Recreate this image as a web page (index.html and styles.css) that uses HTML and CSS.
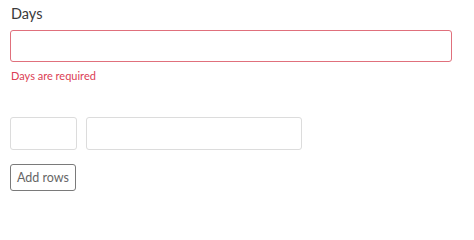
FILE: index.html
```html
<!DOCTYPE html>
<html>
<head>
<meta charset="utf-8">
<link rel="stylesheet" href="styles.css">
</head>
<body>
<div class="form">
  <div class="field">
    <label class="label">Days</label>
    <input class="input input-invalid" type="text">
    <div class="error">Days are required</div>
  </div>
  <div class="row">
    <input class="input input-small" type="text">
    <input class="input input-wide" type="text">
  </div>
  <div>
    <button class="btn">Add rows</button>
  </div>
</div>
</body>
</html>
```
FILE: styles.css
```css
html, body {
  margin: 0;
  padding: 0;
  background: #ffffff;
}
body {
  font-family: "Lato", "Noto Sans", sans-serif;
  color: #333333;
}
.form {
  padding: 4px 22px 0 10px;
  display: flex;
  flex-direction: column;
}
.field {
  display: flex;
  flex-direction: column;
}
.label {
  font-size: 14.5px;
  line-height: 20px;
  padding-left: 1px;
  margin-bottom: 6px;
  color: #3a3a3a;
}
.input {
  box-sizing: border-box;
  border: 1px solid #dcdcdc;
  border-radius: 3px;
  height: 33px;
  background: #fff;
  outline: none;
  margin: 0;
  padding: 0 8px;
}
.input-invalid {
  border-color: #e0707c;
  width: 442px;
  height: 32px;
}
.error {
  font-size: 11px;
  line-height: 16px;
  margin-top: 6px;
  padding-left: 1px;
  color: #dc4055;
}
.row {
  display: flex;
  gap: 9px;
  margin-top: 33px;
}
.input-small {
  width: 67px;
}
.input-wide {
  width: 216px;
}
.btn {
  margin-top: 14px;
  box-sizing: border-box;
  height: 27px;
  width: 66px;
  padding: 0;
  font-family: "Lato", "Noto Sans", sans-serif;
  font-size: 12.5px;
  color: #666;
  background: #fff;
  border: 1px solid #7a7a7a;
  border-radius: 3px;
}
```
